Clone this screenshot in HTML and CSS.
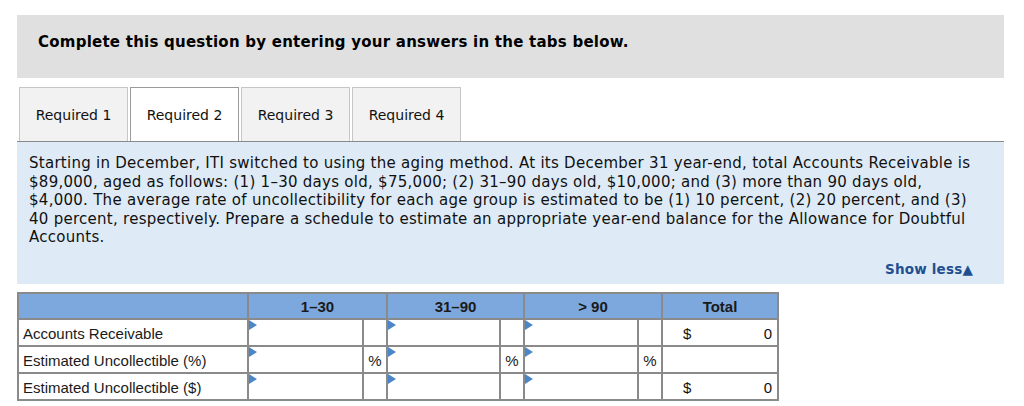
FILE: index.html
```html
<!DOCTYPE html>
<html lang="en">
<head>
  <meta charset="UTF-8" />
  <title>Aging Schedule</title>
  <link rel="stylesheet" href="styles.css">
</head>
<body>
  <div class="wrap">
    <div class="banner">Complete this question by entering your answers in the tabs below.</div>

    <!-- Tabs -->
    <div class="tabs">
      <div class="tab">Required 1</div>
      <div class="tab active">Required 2</div>
      <div class="tab">Required 3</div>
      <div class="tab">Required 4</div>
    </div>

    <div class="prompt">
      <p>Starting in December, ITI switched to using the aging method. At its December 31 year-end, total Accounts Receivable is $89,000, aged as follows: (1) 1&ndash;30 days old, $75,000; (2) 31&ndash;90 days old, $10,000; and (3) more than 90 days old, $4,000. The average rate of uncollectibility for each age group is estimated to be (1) 10 percent, (2) 20 percent, and (3) 40 percent, respectively. Prepare a schedule to estimate an appropriate year-end balance for the Allowance for Doubtful Accounts.</p>
      <div class="show-less">Show less&#9650;</div>
    </div>

    <table class="sched">
      <colgroup>
        <col style="width:230px">
        <col style="width:115px"><col style="width:24px">
        <col style="width:113px"><col style="width:24px">
        <col style="width:114px"><col style="width:24px">
        <col style="width:116px">
      </colgroup>
      <tr class="head">
        <th></th>
        <th colspan="2">1&ndash;30</th>
        <th colspan="2">31&ndash;90</th>
        <th colspan="2">&gt; 90</th>
        <th>Total</th>
      </tr>
      <tr>
        <td class="label">Accounts Receivable</td>
        <td class="inp"><span class="flag"></span></td><td class="pct"></td>
        <td class="inp"><span class="flag"></span></td><td class="pct"></td>
        <td class="inp"><span class="flag"></span></td><td class="pct"></td>
        <td class="total"><span>$</span><span>0</span></td>
      </tr>
      <tr>
        <td class="label">Estimated Uncollectible (%)</td>
        <td class="inp"><span class="flag"></span></td><td class="pct">%</td>
        <td class="inp"><span class="flag"></span></td><td class="pct">%</td>
        <td class="inp"><span class="flag"></span></td><td class="pct">%</td>
        <td class="total"></td>
      </tr>
      <tr>
        <td class="label">Estimated Uncollectible ($)</td>
        <td class="inp"><span class="flag"></span></td><td class="pct"></td>
        <td class="inp"><span class="flag"></span></td><td class="pct"></td>
        <td class="inp"><span class="flag"></span></td><td class="pct"></td>
        <td class="total"><span>$</span><span>0</span></td>
      </tr>
    </table>
  </div>
</body>
</html>
```

FILE: styles.css
```css
body {
  margin: 0;
  background-color: #fff;
  font-family: "DejaVu Sans", Verdana, sans-serif;
  color: #111;
}

.wrap {
  width: 987px;
  margin-left: 17px;
  padding-top: 15px;
}

.banner {
  height: 63px;
  box-sizing: border-box;
  padding: 18px 0 0 21px;
  background-color: #e0e0e0;
  font-size: 15px;
  font-weight: bold;
  letter-spacing: 0.24px;
  line-height: 18px;
  color: #000;
}

/* Tabs */
.tabs {
  display: flex;
  gap: 2px;
  margin-top: 9px;
  padding-left: 2px;
  border-bottom: 1px solid #8a8a8a;
}

.tab {
  width: 109px;
  height: 54px;
  box-sizing: border-box;
  display: flex;
  align-items: center;
  justify-content: center;
  background-color: #f2f2f2;
  border: 1px solid #c6c6c6;
  border-bottom: none;
  font-size: 14px;
  color: #111;
}

.tab.active {
  background-color: #fff;
  border-color: #9a9a9a;
}

.prompt {
  height: 142px;
  box-sizing: border-box;
  padding: 12px 26px 0 12px;
  background-color: #deebf7;
}

.prompt p {
  margin: 0;
  font-size: 15px;
  letter-spacing: 0.27px;
  line-height: 18.5px;
}

.show-less {
  margin-top: 14px;
  margin-right: 5px;
  text-align: right;
  font-size: 13.5px;
  font-weight: bold;
  letter-spacing: 0.2px;
  color: #1f4f8f;
}

/* Schedule table */
.sched {
  margin-top: 8px;
  border-collapse: collapse;
  table-layout: fixed;
  width: 760px;
  font-family: "Liberation Sans", Arial, sans-serif;
  font-size: 15px;
}

.sched th,
.sched td {
  border: 2px solid #8a8a8a;
  padding: 0;
  height: 23px;
}

.sched .head th {
  height: 24px;
  background-color: #7ca8dd;
  font-weight: bold;
  color: #1a1a1a;
  text-align: center;
}

.sched .label {
  padding-left: 4px;
  padding-top: 2px;
  color: #1a1a1a;
}

.sched .inp {
  position: relative;
}

.flag {
  position: absolute;
  left: 0;
  top: 0;
  width: 0;
  height: 0;
  border-top: 5px solid transparent;
  border-bottom: 5px solid transparent;
  border-left: 8px solid #4a86c8;
}

.sched .pct {
  text-align: center;
  padding-top: 2px;
  color: #1a1a1a;
}

.sched .total span {
  display: inline-block;
  padding-top: 2px;
}

.sched .total {
  padding: 0 5px 0 20px;
}

.sched .total span:last-child {
  float: right;
}
```
